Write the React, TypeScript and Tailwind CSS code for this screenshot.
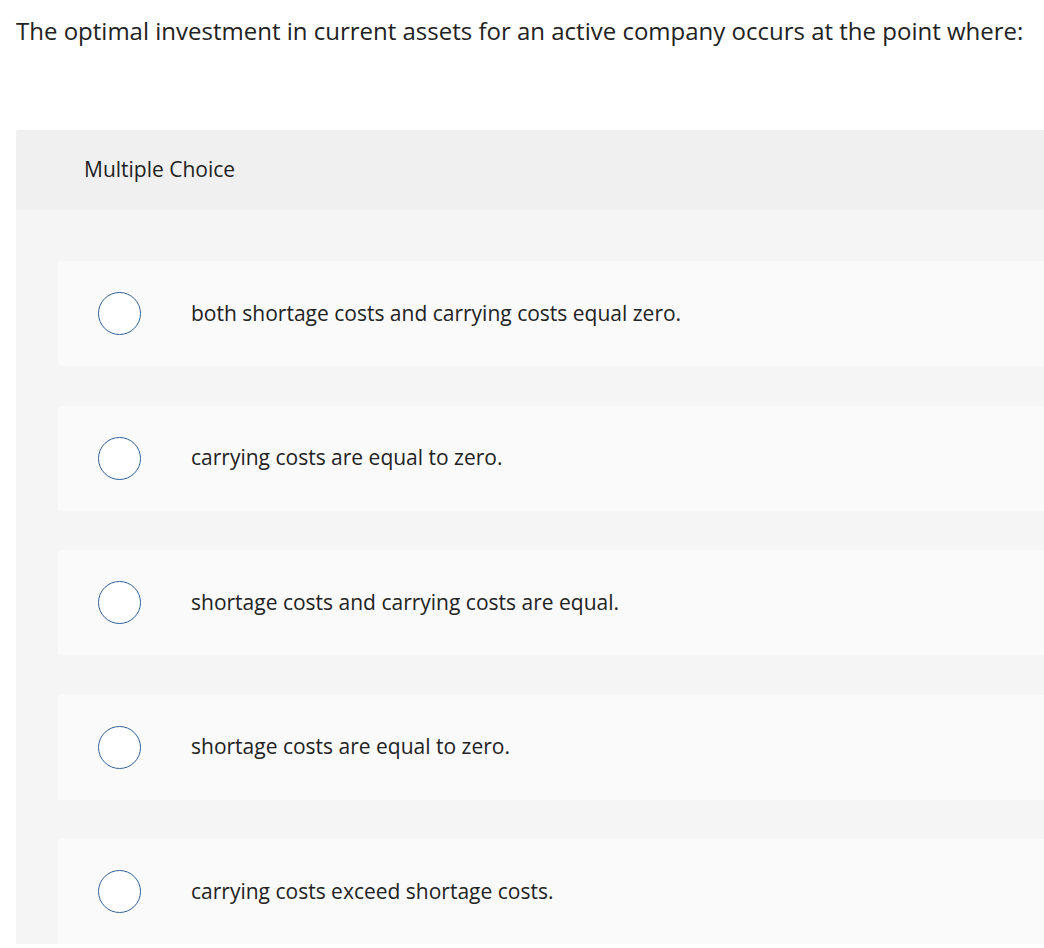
import { useState } from "react";

const choices = [
  "both shortage costs and carrying costs equal zero.",
  "carrying costs are equal to zero.",
  "shortage costs and carrying costs are equal.",
  "shortage costs are equal to zero.",
  "carrying costs exceed shortage costs.",
];

export default function App() {
  const [picked, setPicked] = useState<number | null>(null);

  return (
    <div className="h-[948px] w-[1044px] overflow-hidden bg-white font-['Open_Sans',sans-serif] text-[#222222]">
      <h1 className="pl-[16px] pt-[15px] text-[24px] leading-[32px]">
        The optimal investment in current assets for an active company occurs at the point where:
      </h1>

      <div className="ml-4 mt-[83px] w-[1100px] overflow-hidden rounded-tl-[3px] bg-[#f5f5f5]">
        <div className="flex h-20 items-center bg-[#f0f0f0] pl-[68px] text-[21px]">Multiple Choice</div>

        <div className="flex flex-col gap-[39.5px] pl-[42px] pt-[51px]">
          {choices.map((text, i) => (
            <button
              key={text}
              type="button"
              onClick={() => setPicked(i)}
              className="flex h-[105px] items-center rounded-[3px] bg-[#fafafa] text-left"
            >
              <span className="ml-10 flex h-[43px] w-[43px] shrink-0 items-center justify-center rounded-full border border-[#2f6096] bg-white">
                {picked === i && <span className="h-5 w-5 rounded-full bg-[#2f6096]" />}
              </span>
              <span className="ml-[50px] text-[21px]">{text}</span>
            </button>
          ))}
        </div>
      </div>
    </div>
  );
}
